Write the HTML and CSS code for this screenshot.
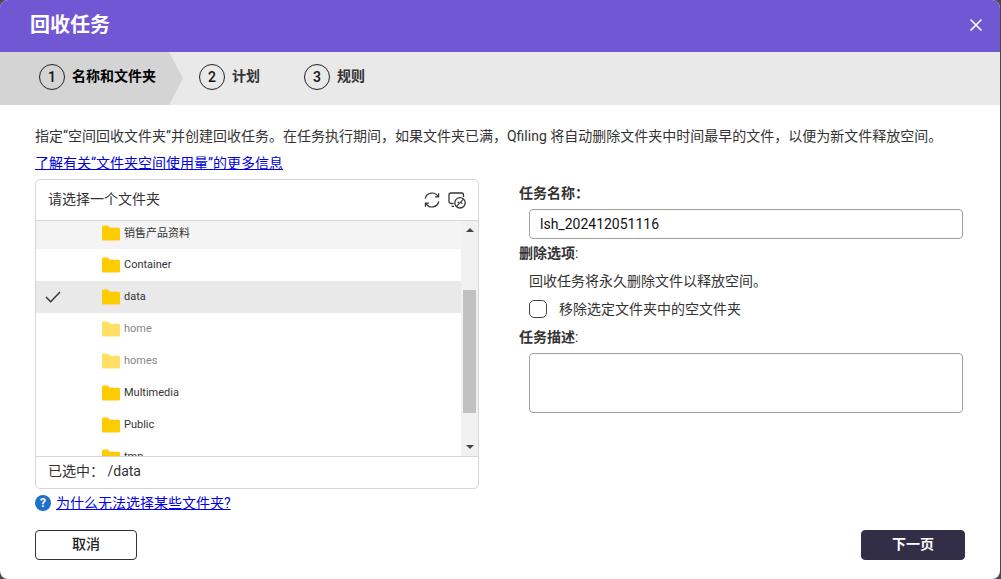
FILE: index.html
```
<!DOCTYPE html>
<html lang="zh-CN">
<head>
	<meta charset="utf-8">
	<title>回收任务</title>
	<link rel="stylesheet" href="styles.css">
</head>
<body>

<svg class="sprite" aria-hidden="true">
	<symbol id="folder" viewBox="0 0 18 16">
		<path d="M0 2a1.500 1.500 0 0 1 1.500-1.500h4.200l2.400 2.300H16.500a1.500 1.500 0 0 1 1.500 1.500V14a1.500 1.500 0 0 1-1.500 1.500h-15A1.500 1.500 0 0 1 0 14z" fill="#fc0"/>
	</symbol>
</svg>

<div class="dialog">
	<header class="title_bar">
		<h1>回收任务</h1>
		<button type="button" class="close" aria-label="关闭">
			<svg width="14" height="14" viewBox="0 0 14 14"><path d="M1.500 1.500l11 11M12.500 1.500l-11 11" stroke="#fff" stroke-width="1.600" fill="none"/></svg>
		</button>
	</header>

	<ol class="steps">
		<li class="step active"><span class="num">1</span><span class="name">名称和文件夹</span></li>
		<li class="step"><span class="num">2</span><span class="name">计划</span></li>
		<li class="step"><span class="num">3</span><span class="name">规则</span></li>
	</ol>

	<form class="content">
		<div class="intro">
			<p>指定“空间回收文件夹”并创建回收任务。在任务执行期间，如果文件夹已满，Qfiling 将自动删除文件夹中时间最早的文件，以便为新文件释放空间。</p>
			<p><a href="#">了解有关“文件夹空间使用量”的更多信息</a></p>
		</div>

		<div class="columns">
			<div class="left">
				<section class="picker">
					<div class="picker_head">
						<span class="picker_title">请选择一个文件夹</span>
						<div class="tools">
							<button type="button" aria-label="刷新">
								<svg width="16" height="16" viewBox="0 0 16 16" fill="none" stroke="#333" stroke-width="1.200">
									<path d="M1.200 6.500A7 7 0 0 1 14 4.400M14.800 9.500A7 7 0 0 1 2 11.600"/>
									<path d="M14.600 1.300v3.500h-3.500M1.400 14.700v-3.500h3.500"/>
								</svg>
							</button>
							<button type="button" aria-label="设备">
								<svg width="18" height="17" viewBox="0 0 18 17" fill="none" stroke="#333" stroke-width="1.300">
									<path d="M5.500 11.500H3A2 2 0 0 1 1 9.500V3A2 2 0 0 1 3 1h10.500a2 2 0 0 1 2 2v2M3.500 14.300h2.500"/>
									<circle cx="12" cy="10.800" r="5.200"/>
									<path d="M8.800 14.200l6.600-7M9.800 9.800l1.500 1.700M12.800 10.200l1.600 1.600" stroke-width="1.100"/>
								</svg>
							</button>
						</div>
					</div>
					<div class="picker_body">
						<ul class="folders">
							<li class="hover"><svg class="icon"><use href="#folder"/></svg><span class="folder_name">销售产品资料</span></li>
							<li><svg class="icon"><use href="#folder"/></svg><span class="folder_name">Container</span></li>
							<li class="selected">
								<svg class="check" width="16" height="12" viewBox="0 0 16 12"><path d="M1 6l4.700 4.700L15 1" fill="none" stroke="#333" stroke-width="1.500"/></svg>
								<svg class="icon"><use href="#folder"/></svg><span class="folder_name">data</span>
							</li>
							<li class="disabled"><svg class="icon"><use href="#folder"/></svg><span class="folder_name">home</span></li>
							<li class="disabled"><svg class="icon"><use href="#folder"/></svg><span class="folder_name">homes</span></li>
							<li><svg class="icon"><use href="#folder"/></svg><span class="folder_name">Multimedia</span></li>
							<li><svg class="icon"><use href="#folder"/></svg><span class="folder_name">Public</span></li>
							<li><svg class="icon"><use href="#folder"/></svg><span class="folder_name">tmp</span></li>
						</ul>
						<div class="scrollbar">
							<span class="arrow up"></span>
							<div class="track"><div class="thumb"></div></div>
							<span class="arrow down"></span>
						</div>
					</div>
					<div class="picker_foot">已选中： /data</div>
				</section>
				<p class="help">
					<span class="help_icon">?</span>
					<a href="#">为什么无法选择某些文件夹?</a>
				</p>
			</div>

			<div class="right">
				<label class="caption" for="task_name">任务名称：</label>
				<input type="text" class="field" id="task_name" value="lsh_202412051116">
				<div class="caption">删除选项<span class="colon">:</span></div>
				<p class="option">回收任务将永久删除文件以释放空间。</p>
				<label class="option"><input type="checkbox" class="box"> 移除选定文件夹中的空文件夹</label>
				<label class="caption" for="task_desc">任务描述<span class="colon">:</span></label>
				<textarea class="field" id="task_desc"></textarea>
			</div>
		</div>

		<footer class="buttons">
			<button type="button" class="btn">取消</button>
			<button type="submit" class="btn primary">下一页</button>
		</footer>
	</form>
</div>

</body>
</html>
```

FILE: styles.css
```
* {
	box-sizing: border-box;
}
body {
	margin: 0;
	background: #4a4a4c;
	color: #333;
	font-family: Roboto, "Noto Sans CJK SC", sans-serif;
	font-size: 14px;
}
h1, p, ul, ol {
	margin: 0;
	padding: 0;
}
button, input, textarea {
	font: inherit;
}
a {
	color: #0000e0;
}
.sprite {
	position: absolute;
	width: 0;
	height: 0;
}
.dialog {
	display: flex;
	flex-direction: column;
	min-height: 100vh;
	margin-right: 1px;
	background: #fff;
	border-radius: 8px;
	overflow: hidden;
}

/* title */
.title_bar {
	display: flex;
	align-items: center;
	justify-content: space-between;
	height: 52px;
	padding: 0 17px 2px 30px;
	background: #7157d4;
	color: #fff;
}
h1 {
	font-size: 20px;
	line-height: 28px;
}
.close {
	display: flex;
	padding: 0;
	border: 0;
	background: none;
}

/* wizard steps */
.steps {
	display: flex;
	height: 53px;
	background: #e9e9e9;
	list-style: none;
	font-weight: bold;
}
.step {
	display: flex;
	align-items: center;
	gap: 7px;
	padding: 0 28px 3px 16px;
}
.step.active {
	padding-left: 39px;
	padding-right: 27px;
	background: #d4d4d4;
	clip-path: polygon(0 0, calc(100% - 14px) 0, 100% 50%, calc(100% - 14px) 100%, 0 100%);
	color: #000;
}
.num {
	width: 26px;
	height: 26px;
	border: 1px solid #222;
	border-radius: 50%;
	color: #111;
	font-weight: 500;
	line-height: 25px;
	text-align: center;
}
.name {
	padding-bottom: 4px;
}

/* content */
.content {
	display: flex;
	flex: 1;
	flex-direction: column;
	padding: 18px 35px 19px;
}
.intro {
	line-height: 27px;
}
.columns {
	display: grid;
	grid-template-columns: 222fr 223fr;
	gap: 40px;
	margin-top: 2px;
}

.picker {
	border: 1px solid #d6d6d6;
	border-radius: 5px;
	overflow: hidden;
}
.picker_head {
	display: flex;
	align-items: center;
	justify-content: space-between;
	height: 41px;
	padding: 0 12px;
	border-bottom: 1px solid #d6d6d6;
}
.picker_title {
	padding-bottom: 4px;
}
.tools {
	display: flex;
	align-items: center;
	gap: 8px;
}
.tools button {
	display: flex;
	padding: 0;
	border: 0;
	background: none;
}
.picker_body {
	display: flex;
	height: 235px;
	overflow: hidden;
}
.folders {
	flex: 1;
	margin-top: -4px;
	list-style: none;
	font-size: 11px;
}
.folders li {
	display: flex;
	position: relative;
	align-items: center;
	gap: 4px;
	height: 32px;
	padding-left: 66px;
}
.folders .hover {
	background: #f4f4f5;
}
.folders .selected {
	background: #e9e9ea;
}
.folders .disabled {
	opacity: 0.6;
}
.folder_name {
	padding-bottom: 2px;
}
.icon {
	width: 18px;
	height: 16px;
}
.check {
	position: absolute;
	left: 9px;
}
.scrollbar {
	display: flex;
	flex-direction: column;
	align-items: center;
	width: 17px;
	padding: 7px 0;
	background: #f1f1f2;
}
.arrow {
	border: 4px solid transparent;
}
.arrow.up {
	border-top: 0;
	border-bottom-color: #444;
}
.arrow.down {
	border-bottom: 0;
	border-top-color: #444;
}
.track {
	flex: 1;
	width: 13px;
	padding-top: 58px;
}
.thumb {
	height: 123px;
	background: #c1c1c1;
}
.picker_foot {
	padding: 0 12px 3px;
	border-top: 1px solid #d6d6d6;
	line-height: 28px;
}
.help {
	display: flex;
	align-items: center;
	gap: 5px;
	line-height: 28px;
}
.help_icon {
	width: 16px;
	height: 16px;
	border-radius: 50%;
	background: #1f70c8;
	color: #fff;
	font-size: 12px;
	font-weight: bold;
	line-height: 16px;
	text-align: center;
}

.right {
	line-height: 28px;
}
.caption {
	display: block;
	font-weight: bold;
}
.colon {
	font-weight: normal;
}
.field {
	display: block;
	width: calc(100% - 12px);
	height: 30px;
	margin: 2px 2px 0 10px;
	padding: 0 10px;
	border: 1px solid #a0a0a0;
	border-radius: 4px;
	background: #fff;
	color: #111;
}
textarea.field {
	height: 60px;
	resize: none;
}
.option {
	display: flex;
	align-items: center;
	gap: 12px;
	padding-left: 10px;
}
.box {
	appearance: none;
	width: 18px;
	height: 18px;
	margin: 0;
	border: 1px solid #444;
	border-radius: 5px;
}

.buttons {
	display: flex;
	justify-content: space-between;
	margin-top: auto;
}
.btn {
	width: 102px;
	height: 30px;
	padding: 0 0 2px;
	border: 1px solid #333;
	border-radius: 4px;
	background: #fff;
	color: #222;
	font-weight: 500;
	line-height: 26px;
}
.btn.primary {
	width: 104px;
	border-color: #332e48;
	background: #332e48;
	color: #fff;
	font-weight: bold;
}
```
